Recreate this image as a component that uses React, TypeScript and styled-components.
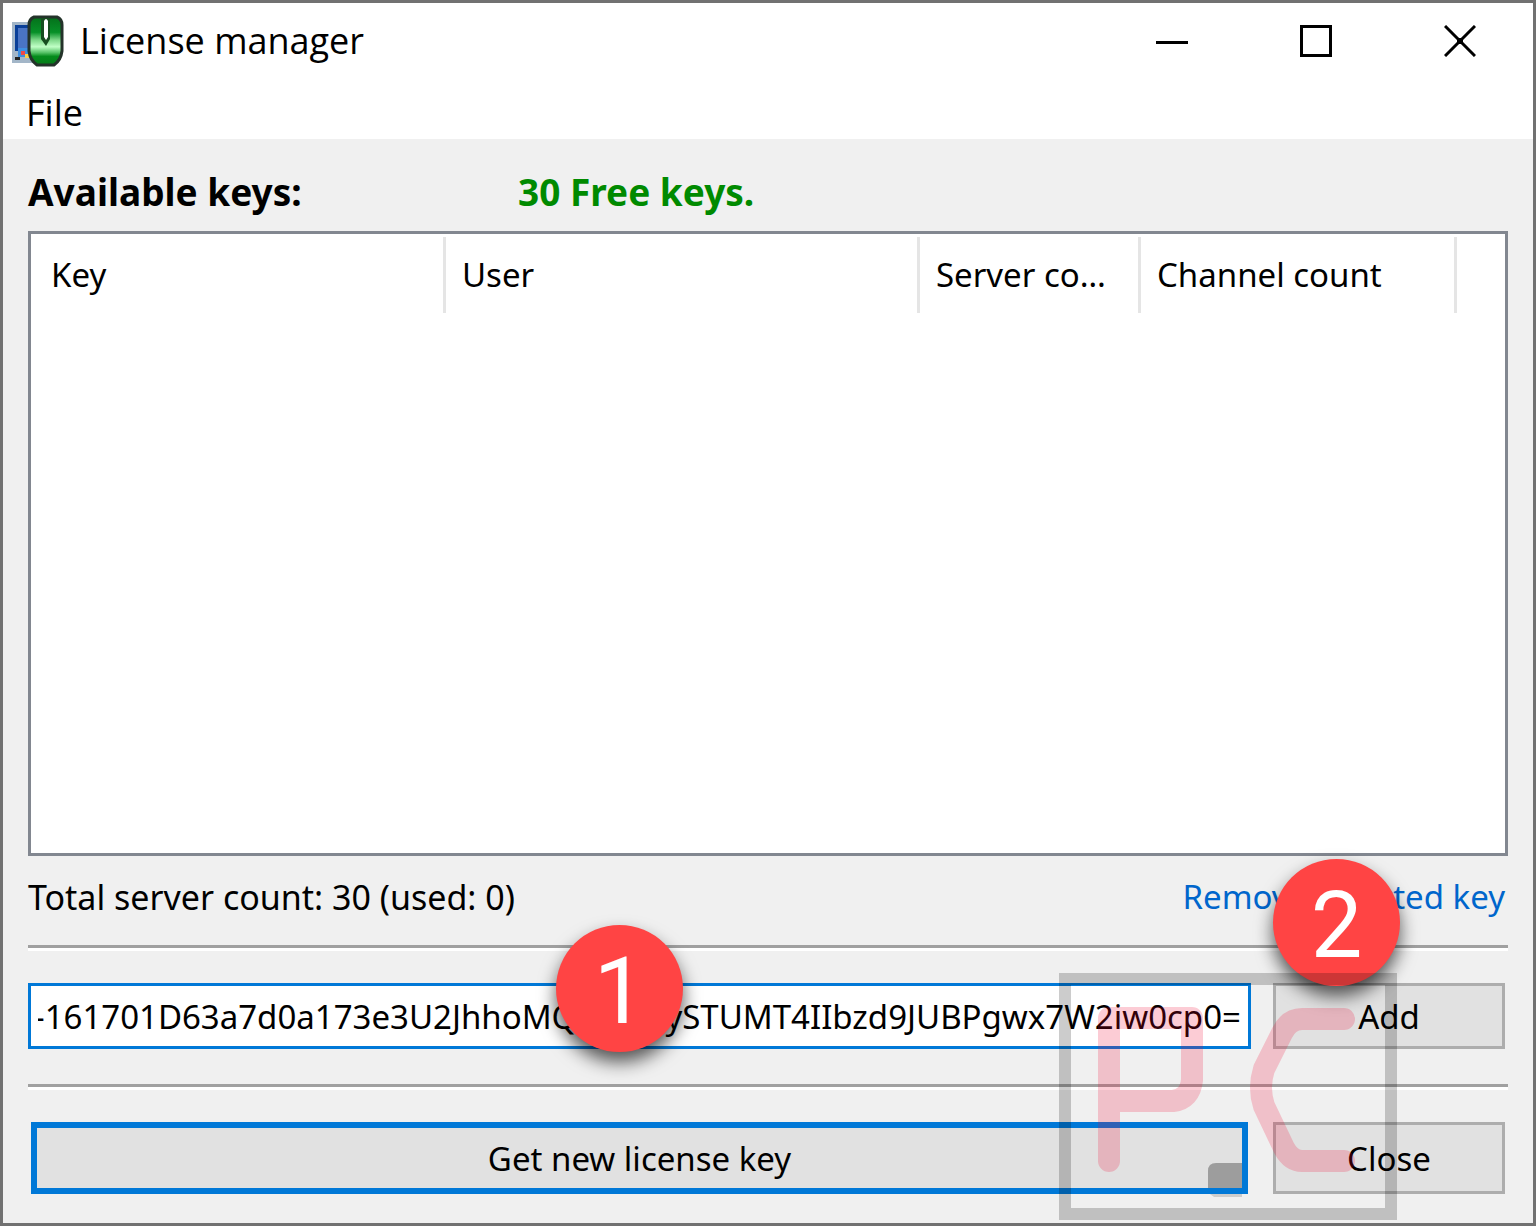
import React, { useLayoutEffect, useRef, useState } from "react";
import styled, { createGlobalStyle } from "styled-components";

const GlobalStyle = createGlobalStyle`
  * { box-sizing: border-box; }
  body { margin: 0; background: #f0f0f0; }
`;

const uiFont = `"Noto Sans", "Liberation Sans", sans-serif`;
const titleFont = `"Open Sans", "Noto Sans", sans-serif`;

const Window = styled.main`
  position: relative;
  display: flex;
  flex-direction: column;
  min-height: 100vh;
  border: 3px solid #717171;
  background: #f0f0f0;
  color: #000;
  font: 33px/44px ${uiFont};
  overflow: hidden;
`;

const TitleBar = styled.header`
  display: flex;
  align-items: center;
  height: 76px;
  padding: 0 1px 0 9px;
  background: #fff;
`;

const Title = styled.h1`
  flex: 1;
  margin: 0 0 0 16px;
  font: 400 36px/44px ${titleFont};
`;

const CaptionButton = styled.button`
  display: grid;
  place-items: center;
  width: 144px;
  height: 76px;
  padding: 0;
  border: 0;
  background: transparent;
`;

const MenuBar = styled.nav`
  display: flex;
  align-items: flex-end;
  height: 60px;
  padding: 0 16px 4px;
  background: #fff;
`;

const MenuItem = styled.button`
  padding: 0 7px;
  border: 0;
  background: transparent;
  color: #000;
  font: 36px/44px ${titleFont};
`;

const Body = styled.section`
  flex: 1;
  display: flex;
  flex-direction: column;
  padding: 31px 25px 29px;
`;

const Summary = styled.div`
  display: grid;
  grid-template-columns: 490px 1fr;
  margin-bottom: 17px;
  font-size: 37px;
  font-weight: 700;
`;

const FreeKeys = styled.span`
  color: #008a00;
`;

const ListBox = styled.div`
  flex: 1;
  min-height: 320px;
  padding-top: 3px;
  border: 3px solid #828790;
  background: #fff;
`;

const KeyTable = styled.table`
  width: 100%;
  table-layout: fixed;
  border-collapse: separate;
  border-spacing: 0;
`;

const HeadCell = styled.th<{ $width?: number; $first?: boolean }>`
  width: ${(p) => (p.$width ? `${p.$width}px` : "auto")};
  height: 76px;
  padding: 0 16px 0 ${(p) => (p.$first ? 20 : 16)}px;
  border-right: ${(p) => (p.$width ? "3px solid #e5e5e5" : "0")};
  font-weight: 400;
  text-align: left;
  white-space: nowrap;
  overflow: hidden;
  text-overflow: ellipsis;
`;

const Status = styled.div`
  display: flex;
  justify-content: space-between;
  margin: 19px 0 26px;
  padding-right: 3px;
`;

const ServerCount = styled.span`
  font-size: 34px;
`;

const RemoveLink = styled.a`
  color: #0066cc;
  text-decoration: none;
`;

const Divider = styled.hr`
  width: 100%;
  height: 6px;
  margin: 0;
  border: 0;
  border-top: 3px solid #a0a0a0;
  background: #fff;
`;

const ActionRow = styled.div`
  position: relative;
  display: grid;
  grid-template-columns: 1fr 232px;
  column-gap: 22px;
  padding-right: 3px;
  margin-top: 32px;
`;

const KeyField = styled.input`
  width: 100%;
  min-width: 0;
  height: 66px;
  margin-bottom: 35px;
  padding: 0 7px;
  border: 3px solid #0078d7;
  border-radius: 0;
  outline: 0;
  background: #fff;
  color: #000;
  font: 33px/44px ${uiFont};
  text-align: right;
`;

const PushButton = styled.button<{ $primary?: boolean }>`
  height: ${(p) => (p.$primary ? 72 : 66)}px;
  margin: ${(p) => (p.$primary ? "0 3px" : "0")};
  padding: 2px 0 0;
  border: ${(p) => (p.$primary ? "6px solid #0078d7" : "3px solid #adadad")};
  background: #e1e1e1;
  color: #000;
  font: 33px/44px ${uiFont};
`;

const CloseButton = styled(PushButton)`
  height: 72px;
`;

const Badge = styled.span<{ $left: string; $top: number }>`
  position: absolute;
  left: ${(p) => p.$left};
  top: ${(p) => p.$top}px;
  width: 127px;
  height: 127px;
  padding-top: 7px;
  border-radius: 50%;
  background: #ff4444;
  box-shadow: 0 10px 18px rgba(0, 0, 0, 0.65);
  color: #fff;
  font: 92px/120px Roboto, "Liberation Sans", sans-serif;
  text-align: center;
  pointer-events: none;
`;

const Watermark = styled.svg`
  position: absolute;
  right: 136px;
  bottom: 3px;
  pointer-events: none;
`;

function AppIcon() {
  return (
    <svg width="52" height="52" viewBox="0 0 52 52" aria-hidden="true">
      <defs>
        <linearGradient id="shell" x1="0" y1="0" x2="0" y2="1">
          <stop offset="0" stopColor="#04701a" />
          <stop offset="0.32" stopColor="#079028" />
          <stop offset="0.48" stopColor="#7fd88a" />
          <stop offset="0.62" stopColor="#c0ffc6" />
          <stop offset="0.74" stopColor="#57c368" />
          <stop offset="0.82" stopColor="#048c1c" />
          <stop offset="1" stopColor="#057a18" />
        </linearGradient>
      </defs>
      <rect x="0" y="7" width="24" height="41" fill="#a3b6c8" />
      <rect x="3" y="10" width="21" height="26" fill="#0a3f98" />
      <rect x="6" y="13" width="18" height="20" fill="#4a74c4" />
      <rect x="3" y="42" width="5" height="3" fill="#222" />
      <rect x="6" y="33" width="13" height="9" fill="#3e8fe0" />
      <rect x="9" y="36" width="4" height="4" fill="#f04848" />
      <rect x="13" y="39" width="4" height="4" fill="#f5d04c" />
      <path d="M22 2H45Q50 4 50 10V36Q49 45 42 50H25Q18 45 17 36V10Q17 4 22 2Z" fill="url(#shell)" stroke="#24332a" strokeWidth="3" />
      <path d="M29 3H38V24L34 31L29 24Z" fill="#174d20" />
      <path d="M32 6Q34 2 36 6V22L34 25L32 22Z" fill="#fff" />
    </svg>
  );
}

const columns = [
  { label: "Key", width: 415 },
  { label: "User", width: 474 },
  { label: "Server count", width: 221 },
  { label: "Channel count", width: 316 },
];

export default function App() {
  const field = useRef<HTMLInputElement>(null);
  const [licenseKey, setLicenseKey] = useState("-161701D63a7d0a173e3U2JhhoMQ8kVfnySTUMT4IIbzd9JUBPgwx7W2iw0cp0=");

  // Keep the end of a long key in view.
  useLayoutEffect(() => {
    if (field.current) field.current.scrollLeft = field.current.scrollWidth;
  }, [licenseKey]);

  return (
    <>
      <GlobalStyle />
      <Window>
        <TitleBar>
          <AppIcon />
          <Title>License manager</Title>
          <CaptionButton aria-label="Minimize">
            <svg width="32" height="32" viewBox="0 0 32 32"><path d="M0 17.5H32" stroke="#000" strokeWidth="3" /></svg>
          </CaptionButton>
          <CaptionButton aria-label="Maximize">
            <svg width="32" height="32" viewBox="0 0 32 32"><rect x="1.5" y="1.5" width="29" height="29" fill="none" stroke="#000" strokeWidth="3" /></svg>
          </CaptionButton>
          <CaptionButton aria-label="Close window">
            <svg width="32" height="32" viewBox="0 0 32 32"><path d="M1 1L31 31M31 1L1 31" stroke="#000" strokeWidth="3" /><rect x="13" y="13" width="6" height="6" /></svg>
          </CaptionButton>
        </TitleBar>
        <MenuBar>
          <MenuItem>File</MenuItem>
        </MenuBar>
        <Body>
          <Summary>
            <span>Available keys:</span>
            <FreeKeys>30 Free keys.</FreeKeys>
          </Summary>
          <ListBox>
            <KeyTable>
              <thead>
                <tr>
                  {columns.map((c, i) => (
                    <HeadCell key={c.label} scope="col" $width={c.width} $first={i === 0}>{c.label}</HeadCell>
                  ))}
                  <HeadCell aria-hidden="true" />
                </tr>
              </thead>
            </KeyTable>
          </ListBox>
          <Status>
            <ServerCount>Total server count: 30 (used: 0)</ServerCount>
            <RemoveLink href="#remove">Remove selected key</RemoveLink>
          </Status>
          <Divider />
          <ActionRow>
            <KeyField ref={field} aria-label="License key" value={licenseKey} onChange={(e) => setLicenseKey(e.target.value)} />
            <PushButton>Add</PushButton>
            <Badge $left="calc(50% - 212px)" $top={-58}>1</Badge>
            <Badge $left="calc(100% - 235px)" $top={-124}>2</Badge>
          </ActionRow>
          <Divider />
          <ActionRow>
            <PushButton $primary>Get new license key</PushButton>
            <CloseButton>Close</CloseButton>
          </ActionRow>
        </Body>
        <Watermark width="338" height="247" viewBox="1059 973 338 247" aria-hidden="true">
          <rect x="1065" y="979" width="326" height="235" fill="none" stroke="#000" strokeOpacity="0.2" strokeWidth="12" />
          <g fill="none" stroke="#f0002d" strokeOpacity="0.2" strokeWidth="22" strokeLinecap="round" strokeLinejoin="round">
            <path d="M1109 1161V1018H1192V1080Q1190 1099 1173 1101H1120" />
            <path d="M1344 1019H1302Q1289 1019 1282 1033L1264 1069Q1258 1088 1264 1106L1284 1148Q1291 1161 1302 1161H1344" />
          </g>
          <path d="M1242 1163H1216Q1208 1163 1208 1171V1188H1242Z" fillOpacity="0.3" />
          <path d="M1210 1194H1242V1197H1214Z" fillOpacity="0.15" />
        </Watermark>
      </Window>
    </>
  );
}
